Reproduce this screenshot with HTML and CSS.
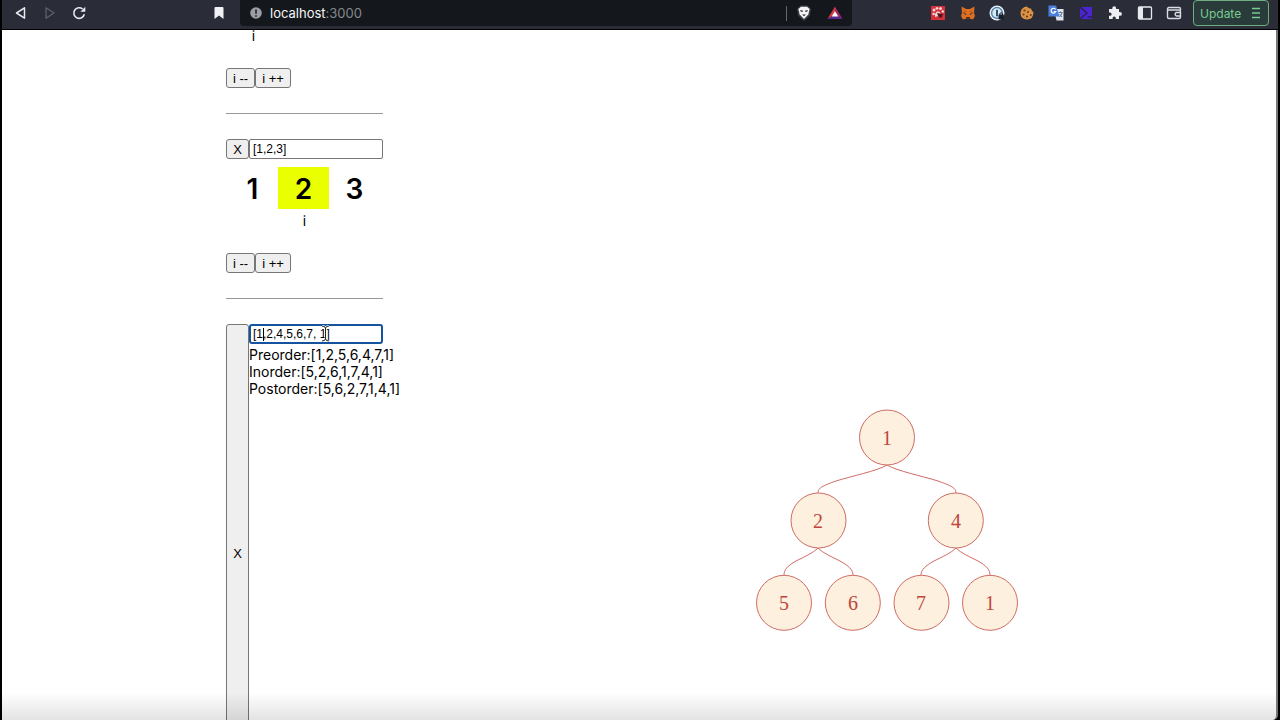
FILE: index.html
```html
<!DOCTYPE html>
<html lang="en">
<head>
  <meta charset="utf-8">
  <title>localhost:3000</title>
  <link rel="stylesheet" href="styles.css">
</head>
<body>
<div class="window">
  <header class="toolbar">
    <div class="nav">
      <button class="icon-btn" aria-label="Back"><svg width="14" height="16" viewBox="0 0 14 16"><path d="M10.500 2.800 L2.500 8 L10.500 13.200 Z" fill="none" stroke="#e6e8ee" stroke-width="1.500" stroke-linejoin="round"/></svg></button>
      <button class="icon-btn" aria-label="Forward"><svg width="14" height="16" viewBox="0 0 14 16"><path d="M3 2.800 L11 8 L3 13.200 Z" fill="none" stroke="#5d616b" stroke-width="1.300" stroke-linejoin="round"/></svg></button>
      <button class="icon-btn" aria-label="Reload"><svg width="14" height="16" viewBox="0 0 14 16"><path d="M12.300 9.200 A5.300 5.300 0 1 1 10.600 4" fill="none" stroke="#e6e8ee" stroke-width="1.600"/><path d="M13.300 1.800 V6.800 H8.300 Z" fill="#e6e8ee"/></svg></button>
      <button class="icon-btn bookmark" aria-label="Bookmark"><svg width="14" height="16" viewBox="0 0 14 16"><path d="M3.500 2 H10.500 Q11.500 2 11.500 3 V14 L7 10.500 L2.500 14 V3 Q2.500 2 3.500 2 Z" fill="#f1f2f5"/></svg></button>
    </div>
    <div class="address">
      <svg width="12" height="12" viewBox="0 0 12 12"><circle cx="6" cy="6" r="5.800" fill="#9b9ea3"/><path d="M6 2.500 V6.800 M6 8.200 V9.700" stroke="#14171b" stroke-width="1.500"/></svg>
      <span class="url">localhost<span class="port">:3000</span></span>
      <span class="divider"></span>
      <svg width="16" height="16" viewBox="0 0 16 16"><path d="M4.500 0.500 H11.500 L15 4 L13.800 10.500 L8 16 L2.200 10.500 L1 4 Z" fill="#3b3e43"/><path d="M5 1.800 H11 L13.600 4 L12.300 9.600 L8 14 L3.700 9.600 L2.400 4 Z" fill="#f4f4f4"/><path d="M4.300 5 L7 5.800 L6.500 7 L4.600 6.400 Z M11.700 5 L9 5.800 L9.500 7 L11.400 6.400 Z M6 9.500 H10 L8 11.200 Z" fill="#292b30"/></svg>
      <svg width="16" height="16" viewBox="0 0 16 16"><path d="M8 1.500 L0.500 14 L8 9.500 Z" fill="#df3b3d"/><path d="M8 1.500 L15.500 14 L8 9.500 Z" fill="#a12b66"/><path d="M0.500 14 H15.500 L8 9 Z" fill="#58278e"/><path d="M8 6.200 L4.700 11.600 H11.300 Z" fill="#fff"/></svg>
    </div>
    <div class="extensions">
      <svg width="16" height="16" viewBox="0 0 16 16"><rect x="1" y="1" width="14" height="14" fill="#d52f39"/><g fill="#f5d6d6"><circle cx="4" cy="5" r="1.500"/><circle cx="7" cy="3.300" r="1.400"/><circle cx="10.500" cy="3.500" r="1.500"/><circle cx="12.800" cy="6.500" r="1.300"/><circle cx="3.600" cy="9" r="1.300"/><path d="M5 12 Q4.500 7 8 6.200 Q11.500 7 11 12 Q8 10.500 5 12"/></g><path d="M7 8 L13 9 L11.500 13 L8.500 12 Z" fill="#51151b"/></svg>
      <svg width="16" height="16" viewBox="0 0 16 16"><path d="M1.500 1.500 L6 4 H10 L14.500 1.500 L14 8 L15 11 L13 14.500 L9.500 13.500 H6.500 L3 14.500 L1 11 L2 8 Z" fill="#dc7022"/><path d="M2 8 L6 5 L5 9 Z M14 8 L10 5 L11 9 Z" fill="#b9541a"/><path d="M4.500 8 L6.800 9.500 L5 9.800 Z M11.500 8 L9.200 9.500 L11 9.800 Z" fill="#302427"/><path d="M6 12 H10 L9.500 14 H6.500 Z" fill="#553326"/></svg>
      <svg width="16" height="16" viewBox="0 0 16 16"><circle cx="8" cy="8" r="7.500" fill="#edf4fa"/><circle cx="8" cy="8" r="5.400" fill="#d9e9f6" stroke="#5386ad" stroke-width="1.500"/><rect x="7" y="4.800" width="2" height="6.500" fill="#31506b"/><rect x="9.500" y="9.500" width="5.500" height="5" rx="1" fill="#18212c"/><path d="M10.800 10 V8.500 Q12.200 6.800 13.600 8.500 V10" fill="none" stroke="#18212c"/></svg>
      <svg width="16" height="16" viewBox="0 0 16 16"><path d="M8 1.500 Q9.500 4 12 3.500 Q12.500 6 14.500 7 Q14.500 14.500 8 14.500 Q1.500 14 1.500 8 Q2 2 8 1.500" fill="#d99244"/><g fill="#693d1e"><circle cx="5.500" cy="5.500" r="1.100"/><circle cx="9" cy="7" r="1"/><circle cx="4.500" cy="9.500" r="1"/><circle cx="8" cy="11.500" r="1.100"/><circle cx="11.800" cy="10" r="1"/></g></svg>
      <svg width="16" height="16" viewBox="0 0 16 16"><path d="M6 4 H15.500 V15.500 H8.500 Z" fill="#dfe3eb"/><path d="M0.500 0.500 H8 L11.500 11.500 H0.500 Z" fill="#4a80dc"/><path d="M7.600 4.400 A2.400 2.400 0 1 0 7.800 6.500 H5.700" fill="none" stroke="#fff" stroke-width="1.200"/><path d="M10.500 7.500 H14.500 M12.500 6.500 V7.500 M14 7.500 Q13.500 10 11.500 12 M11.500 9 L14 12" fill="none" stroke="#5878a8"/></svg>
      <svg width="16" height="16" viewBox="0 0 16 16"><path d="M2 2 H14 V14 H2 Z" fill="#4b25cf"/><path d="M2 2 L9 8 L2 14" fill="none" stroke="#29214f" stroke-width="1.500"/><path d="M9.500 12 H14" stroke="#28186f" stroke-width="1.500"/></svg>
      <svg width="16" height="16" viewBox="0 0 16 16"><path d="M2 4 H5.300 V3.200 A1.900 1.900 0 0 1 9.100 3.200 V4 H12 V7 H13 A1.900 1.900 0 0 1 13 10.800 H12 V14 H8.800 V13 A1.600 1.600 0 0 0 5.600 13 V14 H2 V10.800 H3 A1.600 1.600 0 0 0 3 7.600 H2 Z" fill="#eceef3"/></svg>
      <svg width="16" height="16" viewBox="0 0 16 16"><rect x="1.500" y="2" width="13" height="12" rx="1" fill="none" stroke="#e7e9ef" stroke-width="1.300"/><rect x="1.500" y="2" width="4.500" height="12" fill="#e7e9ef"/></svg>
      <svg width="16" height="16" viewBox="0 0 16 16"><path d="M14.500 5 V4 Q14.500 2.500 13 2.500 H3 Q1.500 2.500 1.500 4 V12 Q1.500 13.500 3 13.500 H13 Q14.500 13.500 14.500 12 V6.500 Q14.500 5 13 5 H2 M14.500 7.500 H10.500 A1.800 1.800 0 0 0 10.500 11 H14.500" fill="none" stroke="#d9dce4" stroke-width="1.400"/></svg>
    </div>
    <button class="update">Update
      <svg width="10" height="12" viewBox="0 0 10 12"><path d="M1 1.500 H9 M1 6 H9 M1 10.500 H9" stroke="#79ca91" stroke-width="1.300"/></svg>
    </button>
  </header>

  <main class="page">
    <section class="widget cut">
      <div class="pointers"><span class="pointer">i</span></div>
      <div class="steps"><button class="btn">i --</button><button class="btn">i ++</button></div>
      <hr class="rule">
    </section>

    <section class="widget">
      <div class="row"><button class="btn close">X</button><input class="field" type="text" aria-label="Array" value="[1,2,3]"></div>
      <div class="cells">
        <span class="cell">1</span>
        <span class="cell active">2</span>
        <span class="cell">3</span>
      </div>
      <div class="pointers"><span class="pointer"></span><span class="pointer">i</span></div>
      <div class="steps"><button class="btn">i --</button><button class="btn">i ++</button></div>
      <hr class="rule">
    </section>

    <section class="tree-widget">
      <button class="btn close">X</button>
      <div class="tree-body">
        <div class="field-wrap">
          <input class="field focused" type="text" aria-label="Tree" value="[1,2,4,5,6,7, 1]">
          <span class="caret"></span>
          <svg class="ibeam" width="9" height="17" viewBox="0 0 9 17"><path d="M1 1 Q4.500 1 4.500 3.500 Q4.500 1 8 1 M4.500 3 V14 M1 16 Q4.500 16 4.500 13.500 Q4.500 16 8 16" fill="none" stroke="#fff" stroke-width="2"/><path d="M1 1 Q4.500 1 4.500 3.500 Q4.500 1 8 1 M4.500 3 V14 M1 16 Q4.500 16 4.500 13.500 Q4.500 16 8 16" fill="none" stroke="#222"/></svg>
        </div>
        <div class="orders">
          <div>Preorder:[1,2,5,6,4,7,1]</div>
          <div>Inorder:[5,2,6,1,7,4,1]</div>
          <div>Postorder:[5,6,2,7,1,4,1]</div>
        </div>
        <svg class="tree" width="780" height="385" viewBox="0 0 780 385">
          <g class="edges">
            <path d="M638 68 C628 74 603 79 587 84 C573 89 569 91 569 96"/>
            <path d="M638 68 C648 74 673 79 689 84 C703 89 707 91 707 96"/>
            <path d="M569 151 C564 156 555 160 547 164 C538 169 535 173 535 178"/>
            <path d="M569 151 C574 156 583 160 591 164 C600 169 604 173 604 178"/>
            <path d="M707 151 C702 156 693 160 685 164 C676 169 672 173 672 178"/>
            <path d="M707 151 C712 156 721 160 729 164 C738 169 741 173 741 178"/>
          </g>
          <g class="nodes">
            <circle cx="638" cy="40.500" r="27.500"/>
            <circle cx="569.500" cy="123.500" r="27.500"/>
            <circle cx="706.800" cy="123.500" r="27.500"/>
            <circle cx="535" cy="205.800" r="27.500"/>
            <circle cx="603.800" cy="205.800" r="27.500"/>
            <circle cx="672.500" cy="205.800" r="27.500"/>
            <circle cx="741" cy="205.800" r="27.500"/>
          </g>
          <g class="labels">
            <text x="638" y="48">1</text>
            <text x="569" y="131">2</text>
            <text x="707" y="131">4</text>
            <text x="535" y="213">5</text>
            <text x="604" y="213">6</text>
            <text x="672" y="213">7</text>
            <text x="741" y="213">1</text>
          </g>
        </svg>
      </div>
    </section>
  </main>
</div>
</body>
</html>
```
FILE: styles.css
```css
* {
  box-sizing: border-box;
}
body {
  margin: 0;
  background: #000;
  font-family: Inter, "Liberation Sans", sans-serif;
  font-size: 14px;
  color: #000;
}
svg {
  display: block;
  flex: none;
}
.window {
  display: flex;
  flex-direction: column;
  height: 100vh;
  padding: 0 2px;
}

/* browser bar */
.toolbar {
  display: flex;
  flex: none;
  align-items: flex-start;
  height: 30px;
  padding-right: 9px;
  background: #2a2d37;
  border-bottom: 1px solid #000;
}
.nav {
  display: flex;
  align-items: center;
  gap: 15px;
  width: 238px;
  height: 26px;
  padding: 0 14px 0 12px;
}
.icon-btn {
  padding: 0;
  border: 0;
  background: none;
}
.bookmark {
  margin-left: auto;
}
.address {
  display: flex;
  flex: 1;
  align-items: center;
  gap: 8px;
  height: 26px;
  padding: 0 9px 0 10px;
  background: #14181c;
  border-radius: 0 0 4px 4px;
}
.url {
  font-size: 13px;
  color: #f4f5f6;
}
.port {
  color: #85888c;
}
.divider {
  width: 1px;
  height: 15px;
  margin-left: auto;
  background: #66696d;
}
.address .divider + svg {
  margin: 0 7px 0 1px;
}
.extensions {
  display: flex;
  align-items: center;
  justify-content: space-between;
  width: 252px;
  height: 26px;
  margin: 0 11px 0 78px;
}
.update {
  display: flex;
  align-items: center;
  justify-content: space-between;
  width: 76px;
  height: 26px;
  padding: 0 7px 0 6px;
  border: 1px solid #6fae83;
  border-radius: 4px;
  background: #293c3b;
  color: #79ca91;
  font-family: Inter, sans-serif;
  font-size: 12px;
}

/* page */
.page {
  position: relative;
  flex: 1;
  min-height: 0;
  overflow: hidden;
  padding-left: 224px;
  background: #fff;
  border-right: 2px solid #777;
  border-bottom-right-radius: 5px;
}
.page::after {
  content: "";
  position: absolute;
  left: 0;
  right: 0;
  bottom: 0;
  height: 28px;
  background: linear-gradient(rgba(0, 0, 0, 0), rgba(0, 0, 0, .11));
  pointer-events: none;
}
.widget {
  width: 157px;
}
.widget.cut {
  margin-top: -6px;
}
.row {
  display: flex;
}
.btn {
  height: 20px;
  padding: 0 6px;
  border: 1px solid #767676;
  border-radius: 3px;
  background: #efefef;
  color: #000;
  font-family: "Liberation Sans", Arial, sans-serif;
  font-size: 13px;
}
.close {
  flex: none;
  width: 23px;
}
.field {
  display: block;
  width: 134px;
  height: 20px;
  padding: 0 3px;
  border: 1px solid #767676;
  border-radius: 2px;
  background: #fff;
  color: #000;
  font-family: "Liberation Sans", Arial, sans-serif;
  font-size: 12px;
}
.field.focused {
  padding: 0 2px;
  border: 2px solid #15539e;
  border-radius: 3px;
}
.cells {
  display: flex;
  padding: 8px 0 0 1px;
}
.cell {
  width: 51px;
  height: 42px;
  line-height: 44px;
  text-align: center;
  font-size: 28px;
  font-weight: 600;
}
.active {
  background: #eaff00;
}
.pointers {
  display: flex;
  height: 20px;
  padding-left: 2px;
  line-height: 24px;
}
.pointer {
  width: 51px;
  text-align: center;
}
.steps {
  display: flex;
  margin-top: 24px;
}
.rule {
  margin: 25px 0;
  border: 0;
  border-top: 1px solid #999;
}

/* binary tree */
.tree-widget {
  display: flex;
}
.tree-widget .close {
  height: auto;
}
.tree-body {
  flex: 1;
}
.field-wrap {
  position: relative;
}
.caret {
  position: absolute;
  left: 14px;
  top: 4px;
  width: 1px;
  height: 13px;
  background: #000;
}
.ibeam {
  position: absolute;
  left: 72px;
  top: 1px;
}
.orders {
  padding-top: 2px;
  line-height: 17px;
}
.edges {
  fill: none;
  stroke: #cf6b64;
}
.nodes {
  fill: #fdf0de;
  stroke: #cf6b64;
}
.labels {
  fill: #c0453c;
  font-family: "Liberation Serif", "Times New Roman", serif;
  font-size: 20px;
  text-anchor: middle;
}
```
